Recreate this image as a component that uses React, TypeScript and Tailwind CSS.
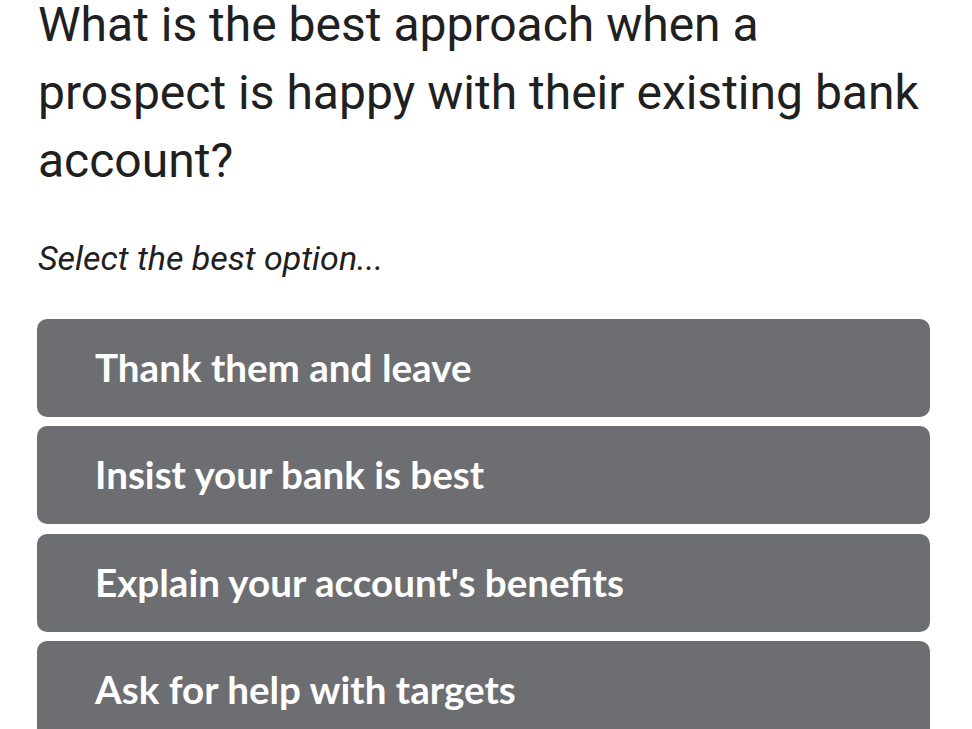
const options = [
  "Thank them and leave",
  "Insist your bank is best",
  "Explain your account's benefits",
  "Ask for help with targets",
];

export default function App() {
  return (
    <div className="min-h-screen bg-white px-[38px] overflow-hidden font-['Roboto',sans-serif] text-[#202020]">
      <h1 className="text-[48px] leading-[68px] font-normal -mt-[9px]">
        What is the best approach when a prospect is happy with their existing bank account?
      </h1>
      <p className="mt-[38px] text-[34px] italic">Select the best option...</p>
      <div className="mt-[35px] -ml-px w-[893px] flex flex-col gap-[9.4px]">
        {options.map((o) => (
          <button
            key={o}
            className="h-[98px] rounded-[10px] bg-[#6d6e72] text-left pl-[58px] text-white text-[38.6px] font-bold font-['Lato',sans-serif]"
          >
            {o}
          </button>
        ))}
      </div>
    </div>
  );
}
